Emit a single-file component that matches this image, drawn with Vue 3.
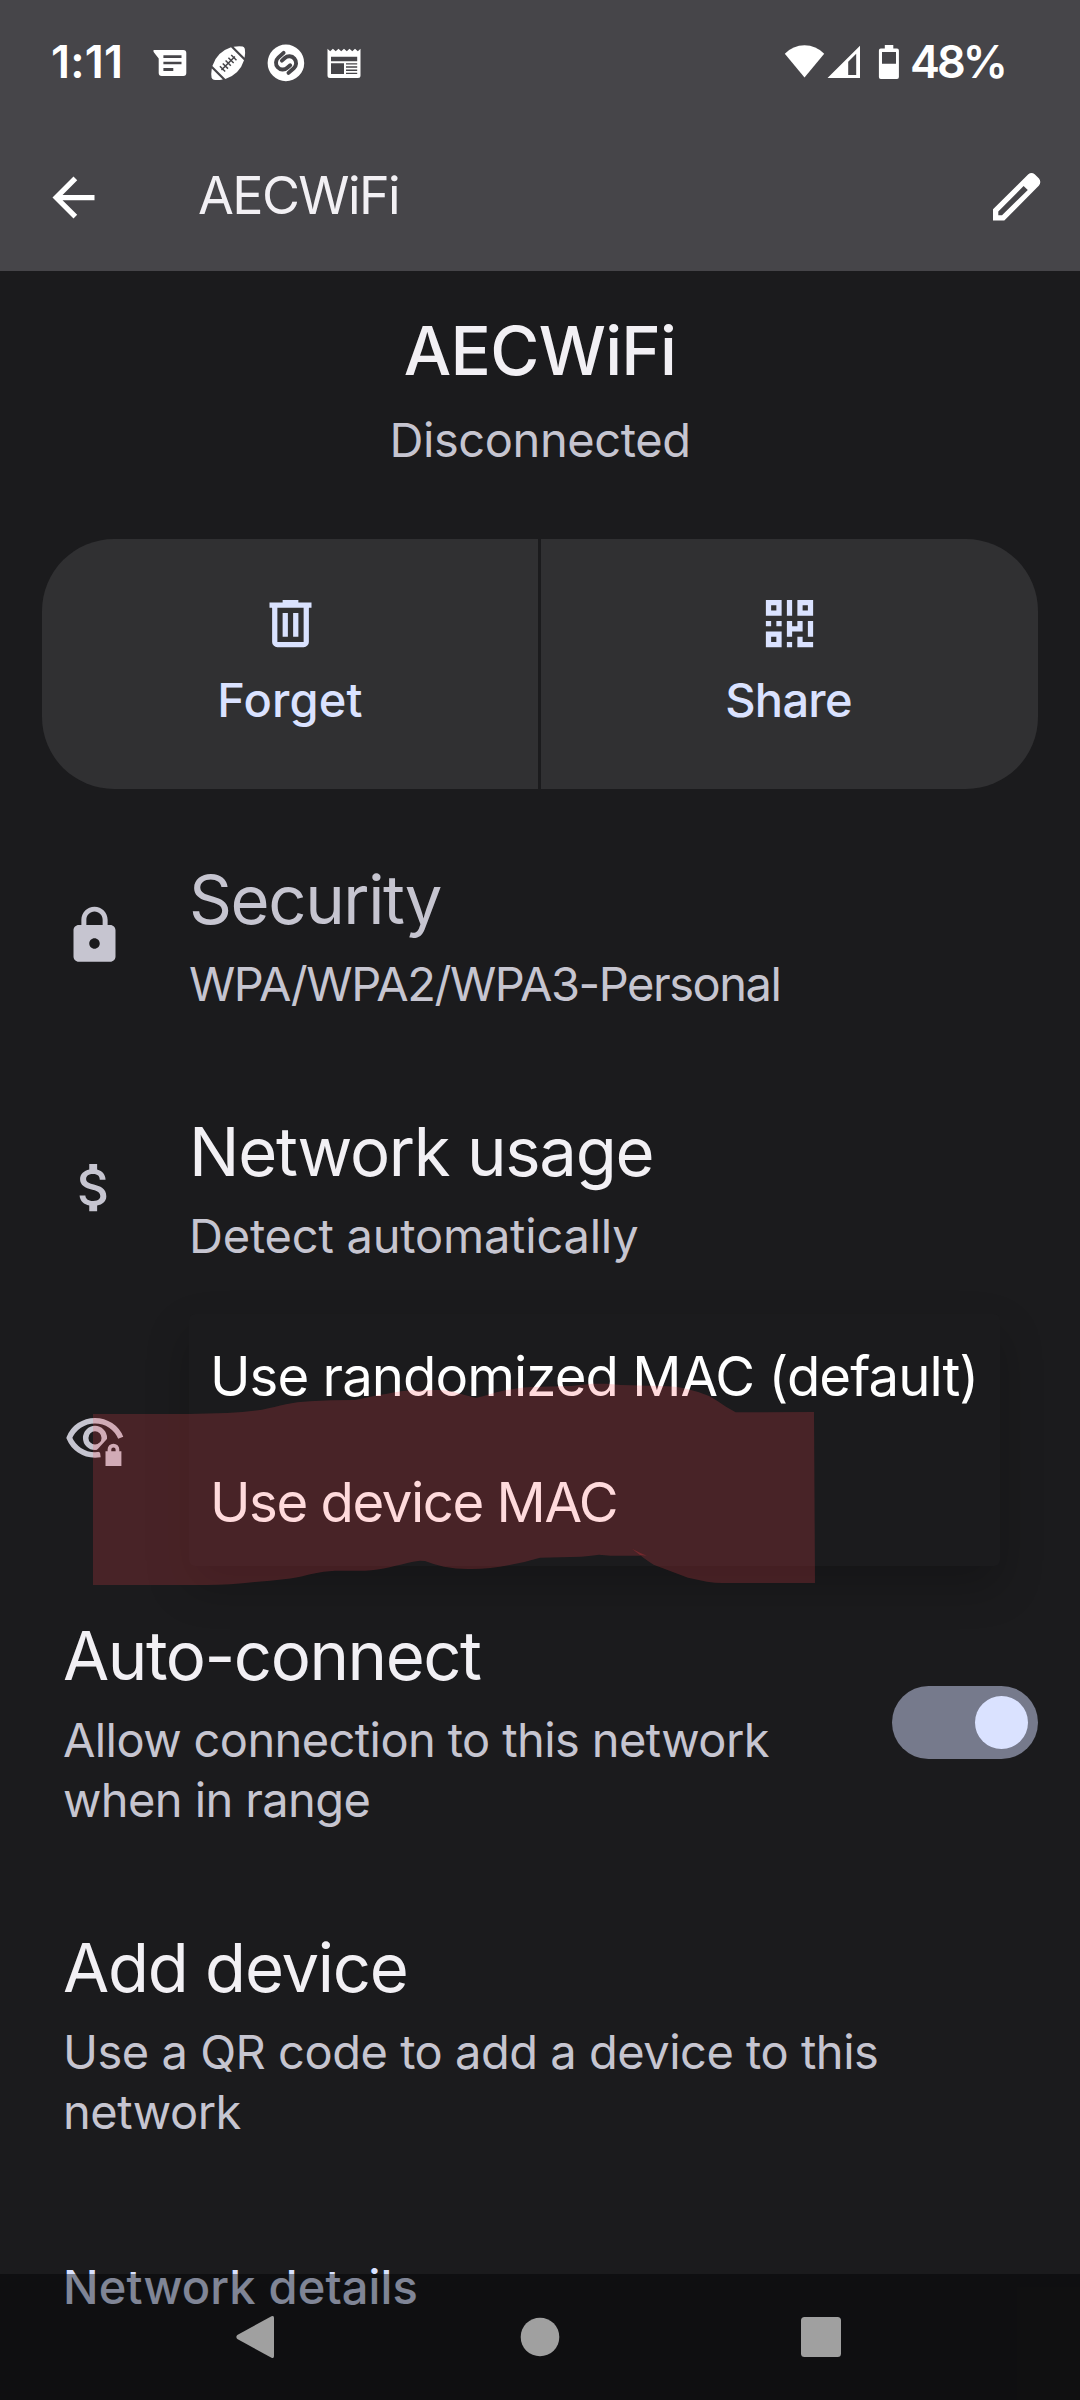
<script setup>
import { ref } from 'vue'

const networkName = 'AECWiFi'
const autoConnect = ref(true)

const infoRows = [
  { id: 'security', title: 'Security', titleSpacing: -1.4, summary: 'WPA/WPA2/WPA3-Personal', spacing: -1.45, disabled: true },
  { id: 'usage', title: 'Network usage', titleSpacing: -1.28, summary: 'Detect automatically', spacing: -0.22, disabled: false },
]

const macOptions = [
  { label: 'Use randomized MAC (default)', spacing: -0.95 },
  { label: 'Use device MAC', spacing: -1.45 },
]
</script>

<template>
  <div class="screen">
    <header class="top">
      <div class="status">
        <span class="clock">1:11</span>
        <div class="notifications">
          <!-- messages -->
          <svg width="40" height="44" viewBox="150 40 40 44">
            <path fill="#fff" fill-rule="evenodd" d="M153.600 50H183.300a3 3 0 0 1 3 3V73a3 3 0 0 1-3 3H161.700a3 3 0 0 1-3-3V58.500L154 52.500Q153 51 153.600 50ZM163.400 55.200V58H181.500V55.200ZM163.400 61.700V64.300H181.500V61.700ZM163.400 68V71H173.300V68Z" />
          </svg>
          <!-- football -->
          <svg width="40" height="44" viewBox="208 40 40 44">
            <g transform="translate(228.200 63.200) rotate(-45)">
              <path fill="#fff" d="M-13.200-9.200Q0-16 13.200-9.200V9.200Q0 16-13.200 9.200Z" />
              <path fill="#fff" d="M-15.400-7.800V7.800Q-20 4.500-22 1.500Q-22.600 0-22-1.500Q-20-4.500-15.400-7.800ZM15.400-7.800V7.800Q20 4.500 22 1.500Q22.600 0 22-1.500Q20-4.500 15.400-7.800Z" />
              <path stroke="#464549" stroke-width="1.500" d="M-9.500 0H9.500M-8-3.700V3.700M-4-3.700V3.700M0-3.700V3.700M4-3.700V3.700M8-3.700V3.700" />
            </g>
          </svg>
          <!-- music recognition -->
          <svg width="40" height="44" viewBox="266 40 40 44">
            <circle cx="285.900" cy="62.900" r="18.300" fill="#fff" />
            <path fill="none" stroke="#464549" stroke-width="3.900" stroke-linecap="round" d="M283.600 52.900L278.300 57.600A6.800 6.800 0 0 0 287.300 67.800L290.200 65.200M288.500 72.900L293.800 68.200A6.800 6.800 0 0 0 284.800 58L281.900 60.600" />
          </svg>
          <!-- news -->
          <svg width="40" height="44" viewBox="324 40 40 44">
            <path fill="#fff" fill-rule="evenodd" d="M327.500 48.700L330.200 51.200L332.900 48.700L335.700 51.200L338.500 48.700L341.200 51.200L344 48.700L346.800 51.200L349.500 48.700L352.300 51.200L355 48.700L357.800 51.200L360.500 48.700V75.500a2.500 2.500 0 0 1-2.500 2.500H330a2.500 2.500 0 0 1-2.500-2.500ZM331 56.700V61.300H357.200V56.700ZM331 63.300V74H344V63.300ZM346 63.200V64.600H357.200V63.200ZM346 66.300V67.700H357.200V66.300ZM346 69.500V70.900H357.200V69.500ZM346 72.700V74.100H357.200V72.700Z" />
          </svg>
        </div>
        <div class="system">
          <svg width="118" height="44" viewBox="784 40 118 44" fill="#fff">
            <path d="M784.800 53.700Q793 45.200 804.500 45.200T824.200 53.700L804.500 77.400Z" />
            <path fill-rule="evenodd" d="M827.500 78L860 45.700V78ZM848.200 61.800V75H856.200V53.800Z" />
            <path fill-rule="evenodd" d="M884.800 45H893.300V48.500H897a1.900 1.900 0 0 1 1.900 1.900V77a1.900 1.900 0 0 1-1.900 1.900H880.800a1.900 1.900 0 0 1-1.900-1.900V50.400a1.900 1.900 0 0 1 1.900-1.900H884.800ZM882 52V63.800H896V52Z" />
          </svg>
          <span class="battery">48%</span>
        </div>
      </div>
      <div class="toolbar">
        <svg width="63" height="63" viewBox="0 0 24 24" fill="#fff">
          <path d="M20 11H7.830l5.590-5.590L12 4l-8 8 8 8 1.410-1.410L7.830 13H20v-2z" />
        </svg>
        <span class="toolbar-title">{{ networkName }}</span>
        <svg class="edit" width="48" height="48" viewBox="0 0 48 48">
          <path fill="#fff" fill-rule="evenodd" d="M0 47.500V36.300L35.300 1.200Q38.500-1.200 41.700 1.200L46 5.500Q48.600 8.800 46 12.500L11.300 47.500ZM5.300 42.300H9L34.800 17L30.600 13L5.300 38.500Z" />
        </svg>
      </div>
    </header>

    <main class="content">
      <h1 class="name">{{ networkName }}</h1>
      <p class="state">Disconnected</p>

      <div class="actions">
        <button class="action">
          <svg width="63" height="63" viewBox="0 0 24 24" fill="#dae2ff">
            <path fill-rule="evenodd" d="M9 3H15V4H20V6H19V19a2 2 0 0 1-2 2H7a2 2 0 0 1-2-2V6H4V4H9ZM7 6V19H17V6ZM9 8H11V17H9ZM13 8H15V17H13Z" />
          </svg>
          <span class="forget">Forget</span>
        </button>
        <button class="action">
          <svg width="63" height="63" viewBox="0 0 24 24" fill="#dae2ff">
            <path fill-rule="evenodd" d="M3 3H9V9H3ZM5 5V7H7V5ZM11 3H13V9H11ZM15 3H21V9H15ZM17 5V7H19V5ZM3 11H5V13H3ZM7 11H9V13H7ZM3 15H9V21H3ZM5 17V19H7V17ZM11 11H13V13H15V11H17V15H13V17H11ZM19 11H21V17H19ZM11 19H13V21H11ZM15 17H17V19H21V21H15Z" />
          </svg>
          <span class="share">Share</span>
        </button>
      </div>

      <section v-for="row in infoRows" :key="row.id" class="row" :class="{ disabled: row.disabled }">
        <svg class="row-icon" width="63" height="63" viewBox="0 0 24 24" fill="#c6c5d0">
          <path v-if="row.id === 'security'" d="M18 8h-1V6c0-2.760-2.240-5-5-5S7 3.240 7 6v2H6c-1.100 0-2 .9-2 2v10c0 1.100.9 2 2 2h12c1.100 0 2-.9 2-2V10c0-1.100-.9-2-2-2zm-6 9c-1.100 0-2-.9-2-2s.9-2 2-2 2 .9 2 2-.9 2-2 2zm3.100-9H8.900V6c0-1.710 1.390-3.100 3.100-3.100s3.100 1.390 3.100 3.100v2z" />
          <path v-else d="M11.800 10.900c-2.270-.59-3-1.200-3-2.150 0-1.090 1.010-1.850 2.700-1.850 1.780 0 2.440.85 2.500 2.100h2.210c-.07-1.720-1.120-3.300-3.210-3.810V3h-3v2.160c-1.940.42-3.500 1.680-3.500 3.610 0 2.310 1.910 3.460 4.700 4.130 2.500.6 3 1.480 3 2.410 0 .69-.49 1.790-2.700 1.790-2.060 0-2.870-.92-2.980-2.100h-2.200c.12 2.190 1.760 3.420 3.680 3.830V21h3v-2.150c1.950-.37 3.500-1.500 3.500-3.550 0-2.840-2.430-3.810-4.700-4.400z" />
        </svg>
        <div class="text">
          <h2 :style="{ letterSpacing: row.titleSpacing + 'px' }">{{ row.title }}</h2>
          <p :style="{ letterSpacing: row.spacing + 'px' }">{{ row.summary }}</p>
        </div>
      </section>

      <section class="row privacy">
        <svg class="row-icon" width="63" height="63" viewBox="0 0 63 63">
          <g fill="none" stroke="#c6c5d0" stroke-width="5.500">
            <path d="M57.700 29.700C53.500 19.500 43.500 12.700 32 12.700S10.500 19.500 6.300 29.900C10.500 40 20.500 46.900 32 46.900Q34.500 46.900 37.300 46.500" />
            <circle cx="32" cy="29.900" r="9.300" />
          </g>
          <path d="M47 31L35.500 43.500" stroke="#1b1b1d" stroke-width="4.500" />
          <path fill="#c6c5d0" d="M42.500 43.200H44.600V41.500a5.850 5.850 0 0 1 11.700 0V43.200H58.400V58H42.500ZM48.300 43.200H52.600V41.600a2.150 2.150 0 0 0-4.300 0Z" fill-rule="evenodd" />
        </svg>
        <ul class="menu">
          <li v-for="option in macOptions" :key="option.label" :style="{ letterSpacing: option.spacing + 'px' }">{{ option.label }}</li>
        </ul>
      </section>

      <section class="row">
        <div class="text auto">
          <h2>Auto-connect</h2>
          <p>Allow connection to this network when in range</p>
        </div>
        <button class="toggle" :class="{ on: autoConnect }" role="switch" :aria-checked="autoConnect" @click="autoConnect = !autoConnect">
          <span class="thumb"></span>
        </button>
      </section>

      <section class="row">
        <div class="text add">
          <h2>Add device</h2>
          <p>Use a QR code to add a device to this network</p>
        </div>
      </section>

      <h3 class="category">Network details</h3>
    </main>

    <!-- hand-drawn highlighter stroke -->
    <svg class="marker" width="1080" height="240" viewBox="0 1370 1080 240">
      <path fill="rgba(255,70,80,.2)" d="M93 1414H189L227 1413Q247 1412 262 1409.700C280 1406 292 1402 310 1401.300Q330 1400 354.700 1400C368 1397.500 376 1395 386 1394Q404 1390 417 1390H440Q448 1390 461 1394L476 1398C486 1396 498 1391 510 1389.500Q522 1387 540 1386.700L571 1386L592 1383.700H607L621 1385L660 1386Q676 1386 688 1389.300Q700 1392 709 1396Q718 1401 726 1406.700L735.600 1412.300L814 1412L815 1583H722.500Q715 1583 707 1581.700L688 1577.700L653.600 1564.700Q643 1558 637 1552.500L646.700 1555.700H610.600L599 1554.700Q592 1555.500 581 1556.700L540 1557.700Q526 1562 509.600 1565Q490 1569 472 1569Q458 1569.500 444 1566.700Q435 1565 425 1561L420 1560.700L413 1561.700C398 1565 382 1570 365 1570.700H335L323.700 1571.700C308 1574 298 1578 286 1579Q270 1581 255 1582Q230 1585 206.600 1585H93Z" />
      <path fill="rgba(255,60,65,.25)" d="M632 1548.700Q640 1553 646.700 1555.700L640 1555Z" />
    </svg>

    <nav class="navbar">
      <svg width="1080" height="126" viewBox="0 2274 1080 126" fill="#a0a0a0">
        <path d="M271.500 2316.300Q274 2315 274 2318V2356Q274 2359 271.500 2357.700L237.300 2339Q235.400 2337 237.300 2335Z" />
        <circle cx="540" cy="2337" r="19.300" />
        <rect x="801" y="2317" width="40" height="40" rx="3.500" />
      </svg>
    </nav>
  </div>
</template>

<style>
body {
  margin: 0;
  background: #1b1b1d;
}
</style>

<style scoped>
.screen {
  position: relative;
  width: 1080px;
  height: 2400px;
  overflow: hidden;
  background: #1b1b1d;
  color: #f2f0f4;
  font-family: Inter, "Liberation Sans", sans-serif;
}
h1, h2, h3, p, ul { margin: 0; padding: 0; font-weight: 400; }
svg { display: block; flex: none; }
button { border: 0; padding: 0; font: inherit; }

.top { height: 271px; background: #464549; }
.status {
  display: flex;
  align-items: center;
  height: 124px;
  padding: 0 74px 0 51px;
  color: #fff;
  font-size: 45px;
  line-height: 56px;
  font-weight: 600;
}
.clock { width: 99px; letter-spacing: .2px; white-space: nowrap; }
.notifications { display: flex; gap: 18px; }
.system { display: flex; align-items: center; gap: 8px; margin-left: auto; }
.battery { width: 96px; letter-spacing: -3px; white-space: nowrap; }
.toolbar { display: flex; align-items: center; height: 146px; padding: 0 39px 0 42px; }
.toolbar-title { margin: 0 0 2px 93px; font-size: 52px; line-height: 64px; letter-spacing: -1.6px; }
.edit { margin-left: auto; }

.name { margin-top: 40px; text-align: center; font-size: 67px; line-height: 80px; font-weight: 500; letter-spacing: -.7px; }
.state { margin-top: 19px; text-align: center; color: #c6c5d0; font-size: 47px; line-height: 60px; letter-spacing: -.4px; }

.actions { display: flex; gap: 3px; margin: 69px 42px 22px; height: 250px; }
.action {
  flex: 1;
  display: flex;
  flex-direction: column;
  align-items: center;
  gap: 15px;
  padding-top: 53px;
  background: #303032;
  color: #dae2ff;
  font-size: 47px;
  line-height: 60px;
  font-weight: 500;
}
.action:first-child { flex: none; width: 496px; border-radius: 72px 0 0 72px; }
.action:last-child { border-radius: 0 72px 72px 0; }
.forget { letter-spacing: .2px; }
.share { margin-right: 2px; letter-spacing: -.7px; }

.row { position: relative; display: flex; align-items: center; padding: 49px 42px 49px 63px; }
.row-icon { margin: -3px 63px 0 0; }
.text h2 { font-size: 67px; line-height: 80px; }
.text p { margin-top: 14px; color: #c6c5d0; font-size: 47px; line-height: 60px; }
.disabled h2 { color: #c6c5d0; }
.privacy { height: 154px; }
.auto { width: 740px; }
.auto h2 { letter-spacing: -1.45px; }
.auto p { letter-spacing: -.6px; }
.add { width: 850px; }
.add h2 { letter-spacing: -1.25px; }
.add p { letter-spacing: -.48px; }

.menu {
  position: absolute;
  left: 189px;
  top: -1px;
  width: 811px;
  border-radius: 6px;
  background: #1b1b1d;
  box-shadow: 0 20px 44px rgba(0, 0, 0, .22);
  list-style: none;
  color: #fff;
  font-size: 54.500px;
}
.menu li { height: 126px; line-height: 124px; padding-left: 21px; white-space: nowrap; }

.toggle { display: flex; align-items: center; width: 146px; height: 73px; margin: 0 0 1px auto; padding: 0 10px; border-radius: 37px; background: #767a8c; }
.toggle.on { justify-content: flex-end; }
.thumb { width: 53px; height: 53px; border-radius: 50%; background: #dae2ff; }

.category { margin: 66px 0 0 63px; color: #dae2ff; font-size: 47px; line-height: 60px; font-weight: 500; letter-spacing: .15px; }

.marker { position: absolute; left: 0; top: 1370px; pointer-events: none; }
.navbar { position: absolute; left: 0; bottom: 0; height: 126px; background: rgba(0, 0, 0, .41); }
</style>
